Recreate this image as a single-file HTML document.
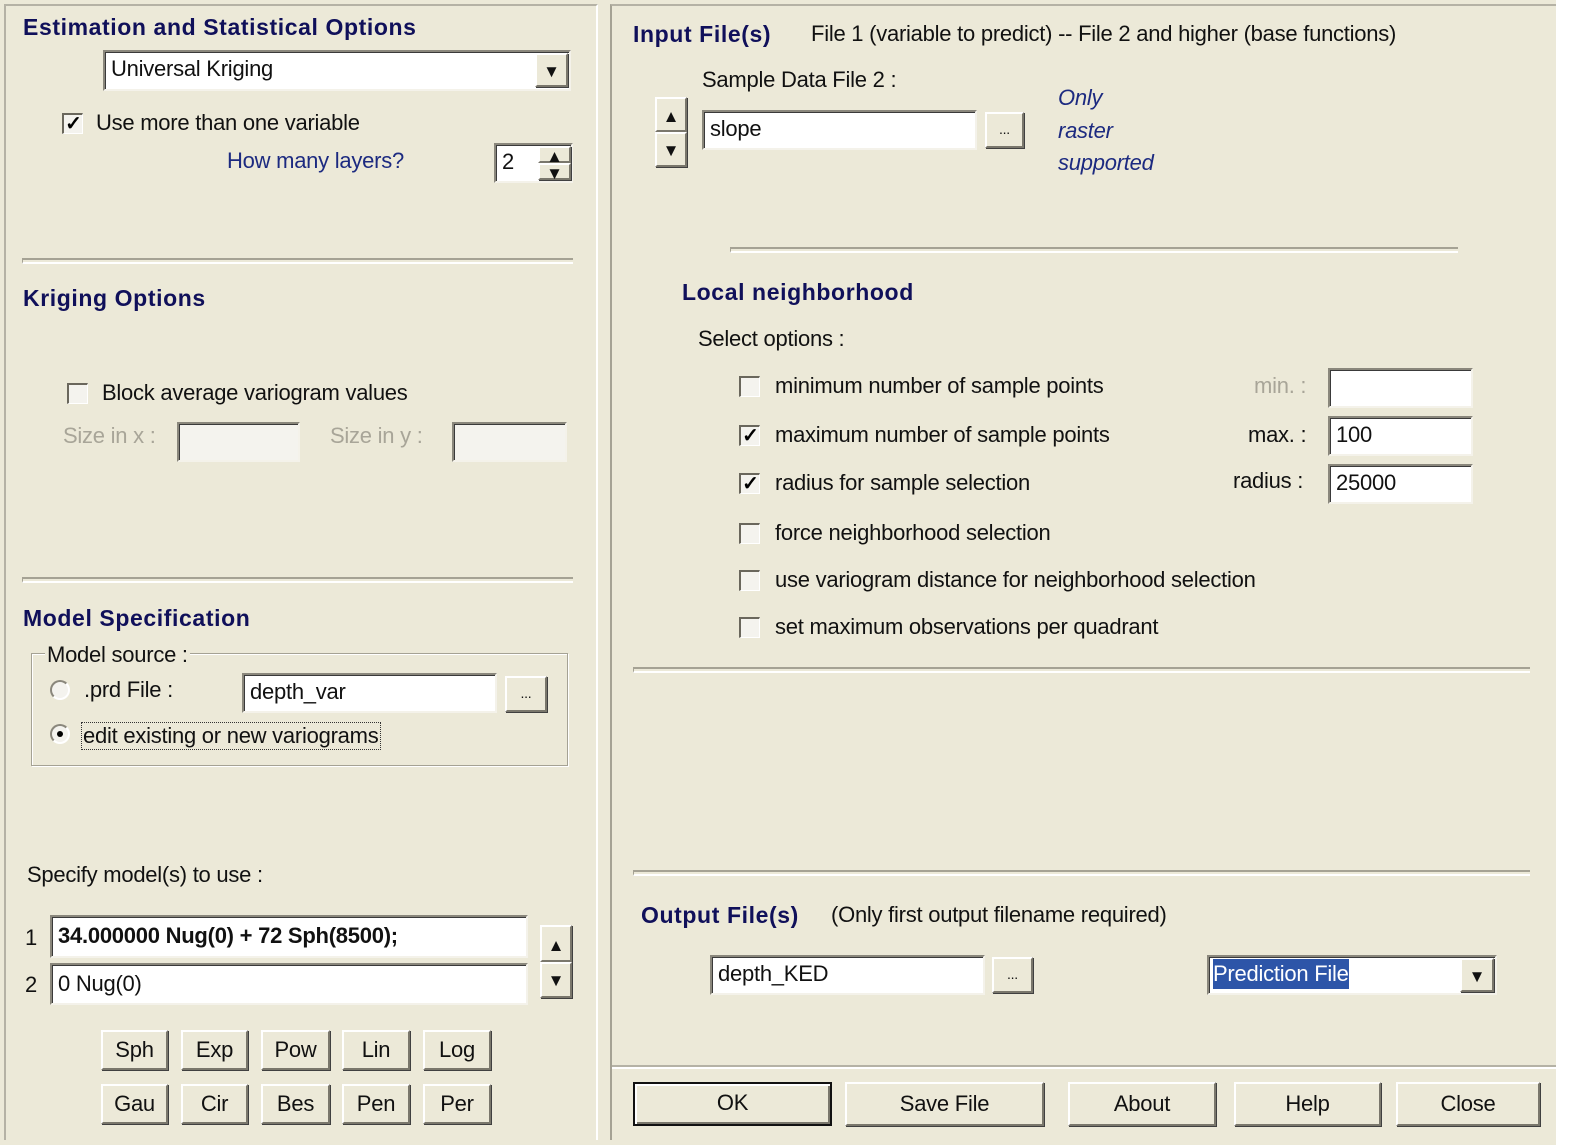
<!DOCTYPE html>
<html><head><meta charset="utf-8">
<style>
html,body{margin:0;padding:0}
body{width:1570px;height:1145px;background:#ece9d8;position:relative;overflow:hidden;font-family:"Liberation Sans",sans-serif;font-size:22px;color:#111;letter-spacing:-0.25px}
.a{position:absolute;white-space:nowrap}
.t{position:absolute;white-space:nowrap;line-height:26px}
.h{font-weight:bold;color:#10105a;letter-spacing:0.6px;font-size:23px}
.nv{color:#1c2a80}
.g{color:#a8a598}
.ed{position:absolute;background:#fff;border-top:2px solid #8a877c;border-left:2px solid #8a877c;border-bottom:2px solid #f4f2ea;border-right:2px solid #f4f2ea;box-shadow:inset 1px 1px 0 #3a3a3a;box-sizing:border-box;padding-left:6px;line-height:34px;overflow:hidden}
.ed.dis{background:#f4f3ee}
.bt{position:absolute;background:#ece9d8;border-top:2px solid #fff;border-left:2px solid #fff;border-right:2px solid #7a776c;border-bottom:2px solid #7a776c;box-shadow:1px 1px 0 #404040;box-sizing:border-box;text-align:center}
.sep{position:absolute;height:6px;border-top:2px solid #a5a294;border-bottom:2px solid #fff;border-left:1px solid #a5a294;box-sizing:border-box}
.cb{position:absolute;width:21px;height:21px;background:#f4f3ee;border-top:2px solid #6a675c;border-left:2px solid #6a675c;border-bottom:1px solid #fff;border-right:1px solid #fff;box-sizing:border-box;font-size:20px;line-height:18px;text-align:center;font-weight:bold;letter-spacing:0;color:#000;text-indent:1px}
.rb{position:absolute;width:20px;height:20px;border-radius:50%;background:#f4f3ee;border-top:2px solid #8a877c;border-left:2px solid #8a877c;border-right:2px solid #fff;border-bottom:2px solid #fff;box-sizing:border-box}
.arr{font-size:17px;letter-spacing:0;line-height:1}
</style></head><body>

<div class="a" style="left:4px;top:4px;width:594px;height:1136px;border-left:2px solid #b5b2a5;border-top:2px solid #b5b2a5;border-right:2px solid #fff;box-sizing:border-box"></div>
<div class="a" style="left:610px;top:4px;width:946px;height:1136px;border-left:2px solid #a5a294;border-top:2px solid #b5b2a5;box-sizing:border-box"></div>
<div class="a" style="left:1556px;top:0;width:14px;height:1145px;background:#fff"></div>

<!-- LEFT -->
<div class="t h" style="left:23px;top:14px">Estimation and Statistical Options</div>
<div class="ed" style="left:103px;top:50px;width:468px;height:41px">Universal Kriging</div>
<div class="bt" style="left:535px;top:53px;width:33px;height:34px;line-height:30px"><span class="arr">▼</span></div>
<div class="cb" style="left:62px;top:113px">✓</div>
<div class="t" style="left:96px;top:110px">Use more than one variable</div>
<div class="t nv" style="left:227px;top:148px">How many layers?</div>
<div class="ed" style="left:494px;top:143px;width:79px;height:40px">2</div>
<div class="bt" style="left:538px;top:146px;width:33px;height:17px;line-height:13px"><span class="arr">▲</span></div>
<div class="bt" style="left:538px;top:163px;width:33px;height:17px;line-height:13px"><span class="arr">▼</span></div>
<div class="sep" style="left:22px;top:258px;width:551px"></div>

<div class="t h" style="left:23px;top:285px">Kriging Options</div>
<div class="cb" style="left:67px;top:383px"></div>
<div class="t" style="left:102px;top:380px">Block average variogram values</div>
<div class="t g" style="left:63px;top:423px">Size in x :</div>
<div class="ed dis" style="left:177px;top:422px;width:123px;height:40px"></div>
<div class="t g" style="left:330px;top:423px">Size in y :</div>
<div class="ed dis" style="left:452px;top:422px;width:115px;height:40px"></div>
<div class="sep" style="left:22px;top:577px;width:551px"></div>

<div class="t h" style="left:23px;top:605px">Model Specification</div>
<div class="a" style="left:31px;top:653px;width:537px;height:113px;border:1px solid #a5a294;box-shadow:1px 1px 0 #fff, inset 1px 1px 0 #fff;box-sizing:border-box"></div>
<div class="t" style="left:45px;top:642px;background:#ece9d8;padding:0 2px">Model source :</div>
<div class="rb" style="left:50px;top:680px"></div>
<div class="t" style="left:84px;top:677px">.prd File :</div>
<div class="ed" style="left:242px;top:673px;width:255px;height:40px">depth_var</div>
<div class="bt" style="left:505px;top:676px;width:42px;height:36px;line-height:30px;font-size:14px">...</div>
<div class="rb" style="left:50px;top:724px"><div style="position:absolute;left:5px;top:5px;width:6px;height:6px;border-radius:50%;background:#000"></div></div>
<div class="t" style="left:81px;top:722px;border:1px dotted #333;padding:0 1px">edit existing or new variograms</div>

<div class="t" style="left:27px;top:862px">Specify model(s) to use :</div>
<div class="t" style="left:25px;top:925px">1</div>
<div class="ed" style="left:50px;top:915px;width:478px;height:43px;font-weight:bold;line-height:38px">34.000000 Nug(0) + 72 Sph(8500);</div>
<div class="t" style="left:25px;top:972px">2</div>
<div class="ed" style="left:50px;top:963px;width:478px;height:42px;line-height:38px">0 Nug(0)</div>
<div class="bt" style="left:540px;top:925px;width:32px;height:37px;line-height:34px"><span class="arr">▲</span></div>
<div class="bt" style="left:540px;top:962px;width:32px;height:36px;line-height:30px"><span class="arr">▼</span></div>

<div class="bt" style="left:101px;top:1030px;width:67px;height:40px;line-height:36px">Sph</div>
<div class="bt" style="left:181px;top:1030px;width:67px;height:40px;line-height:36px">Exp</div>
<div class="bt" style="left:261px;top:1030px;width:69px;height:40px;line-height:36px">Pow</div>
<div class="bt" style="left:342px;top:1030px;width:68px;height:40px;line-height:36px">Lin</div>
<div class="bt" style="left:423px;top:1030px;width:68px;height:40px;line-height:36px">Log</div>
<div class="bt" style="left:101px;top:1084px;width:67px;height:40px;line-height:36px">Gau</div>
<div class="bt" style="left:181px;top:1084px;width:67px;height:40px;line-height:36px">Cir</div>
<div class="bt" style="left:261px;top:1084px;width:69px;height:40px;line-height:36px">Bes</div>
<div class="bt" style="left:342px;top:1084px;width:68px;height:40px;line-height:36px">Pen</div>
<div class="bt" style="left:423px;top:1084px;width:68px;height:40px;line-height:36px">Per</div>

<!-- RIGHT -->
<div class="t h" style="left:633px;top:21px">Input File(s)</div>
<div class="t" style="left:811px;top:21px">File 1 (variable to predict) -- File 2 and higher (base functions)</div>
<div class="t" style="left:702px;top:67px">Sample Data File 2 :</div>
<div class="bt" style="left:655px;top:97px;width:32px;height:35px;line-height:32px"><span class="arr">▲</span></div>
<div class="bt" style="left:655px;top:132px;width:32px;height:35px;line-height:30px"><span class="arr">▼</span></div>
<div class="ed" style="left:702px;top:110px;width:275px;height:40px">slope</div>
<div class="bt" style="left:985px;top:112px;width:39px;height:36px;line-height:30px;font-size:14px">...</div>
<div class="t nv" style="left:1058px;top:85px;font-style:italic;font-size:22px">Only</div>
<div class="t nv" style="left:1058px;top:118px;font-style:italic;font-size:22px">raster</div>
<div class="t nv" style="left:1058px;top:150px;font-style:italic;font-size:22px">supported</div>
<div class="sep" style="left:730px;top:247px;width:728px"></div>

<div class="t h" style="left:682px;top:279px">Local neighborhood</div>
<div class="t" style="left:698px;top:326px">Select options :</div>
<div class="cb" style="left:739px;top:376px"></div>
<div class="t" style="left:775px;top:373px">minimum number of sample points</div>
<div class="cb" style="left:739px;top:425px">✓</div>
<div class="t" style="left:775px;top:422px">maximum number of sample points</div>
<div class="cb" style="left:739px;top:473px">✓</div>
<div class="t" style="left:775px;top:470px">radius for sample selection</div>
<div class="cb" style="left:739px;top:523px"></div>
<div class="t" style="left:775px;top:520px">force neighborhood selection</div>
<div class="cb" style="left:739px;top:570px"></div>
<div class="t" style="left:775px;top:567px">use variogram distance for neighborhood selection</div>
<div class="cb" style="left:739px;top:617px"></div>
<div class="t" style="left:775px;top:614px">set maximum observations per quadrant</div>
<div class="t g" style="left:1254px;top:373px">min. :</div>
<div class="t" style="left:1248px;top:422px">max. :</div>
<div class="t" style="left:1233px;top:468px">radius :</div>
<div class="ed" style="left:1328px;top:368px;width:145px;height:40px"></div>
<div class="ed" style="left:1328px;top:416px;width:145px;height:40px">100</div>
<div class="ed" style="left:1328px;top:464px;width:145px;height:40px">25000</div>
<div class="sep" style="left:633px;top:667px;width:897px"></div>
<div class="sep" style="left:633px;top:870px;width:897px"></div>

<div class="t h" style="left:641px;top:902px">Output File(s)</div>
<div class="t" style="left:831px;top:902px">(Only first output filename required)</div>
<div class="ed" style="left:710px;top:955px;width:275px;height:40px">depth_KED</div>
<div class="bt" style="left:992px;top:957px;width:41px;height:36px;line-height:30px;font-size:14px">...</div>
<div class="ed" style="left:1207px;top:955px;width:290px;height:40px;padding-left:4px"><span style="background:#2d55a8;color:#fff;display:inline-block;line-height:30px">Prediction File</span></div>
<div class="bt" style="left:1460px;top:958px;width:34px;height:34px;line-height:30px"><span class="arr">▼</span></div>

<div class="a" style="left:612px;top:1065px;width:944px;height:4px;border-top:2px solid #b5b2a5;border-bottom:2px solid #fff;box-sizing:border-box"></div>

<div class="bt" style="left:633px;top:1082px;width:199px;height:44px;line-height:38px;border:2px solid #111;box-shadow:inset 2px 2px 0 #fff, inset -2px -2px 0 #7a776c">OK</div>
<div class="bt" style="left:845px;top:1082px;width:199px;height:44px;line-height:40px">Save File</div>
<div class="bt" style="left:1068px;top:1082px;width:148px;height:44px;line-height:40px">About</div>
<div class="bt" style="left:1234px;top:1082px;width:147px;height:44px;line-height:40px">Help</div>
<div class="bt" style="left:1396px;top:1082px;width:144px;height:44px;line-height:40px">Close</div>

</body></html>
